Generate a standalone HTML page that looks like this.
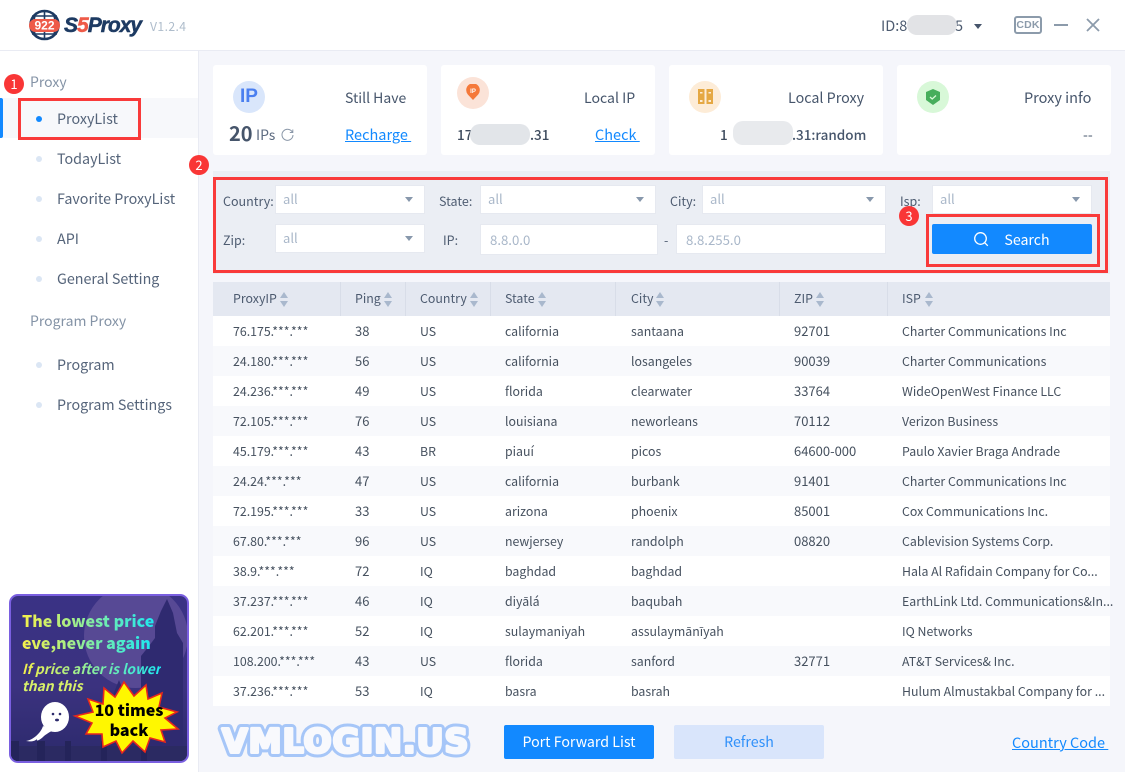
<!DOCTYPE html>
<html lang="en"><head><meta charset="utf-8"><title>S5Proxy</title>
<style>
*{box-sizing:border-box}
html,body{margin:0;padding:0;width:1125px;height:772px;overflow:hidden;background:#f5f6fb}
body{position:relative;font-family:"Noto Sans CJK SC","Liberation Sans",sans-serif;color:#46556b;font-size:14px}
.a{position:absolute}
.t{position:absolute;white-space:nowrap;line-height:20px}
.card{position:absolute;top:65px;width:214px;height:90px;background:#fff;border-radius:3px}
.ic{position:absolute;width:32px;height:32px;border-radius:50%}
.lnk{color:#1289ff;text-decoration:underline;font-size:14.5px}
.nav{font-size:14.3px;color:#55647a;left:57px}
.dot{position:absolute;left:36px;width:6px;height:6px;border-radius:50%;background:#dbe6f4}
.sel,.inp{position:absolute;background:#fff;border:1px solid #e6e9f0;color:#a9b7c9;font-size:13px;line-height:26px;padding-left:7px}
.sel:after{content:"";position:absolute;right:11px;top:11px;border-left:4.5px solid transparent;border-right:4.5px solid transparent;border-top:5px solid #8898ac}
.inp{padding-left:9px;line-height:29px;font-size:13.2px}
.lb{position:absolute;white-space:nowrap;font-size:12.5px;line-height:20px;color:#4d5b70}
.badge{position:absolute;width:20px;height:20px;border-radius:50%;background:#f93636;color:#fff;font-size:13px;line-height:20px;text-align:center}
.th{position:absolute;top:0;height:34px;line-height:33px;font-size:12.4px;color:#4d5b70;white-space:nowrap}
.sep{position:absolute;top:0;width:1px;height:34px;background:#d8dde8}
.s{position:absolute;top:10px;width:8px;height:15px}
.s:before,.s:after{content:"";position:absolute;left:0;border-left:4px solid transparent;border-right:4px solid transparent}
.s:before{top:0;border-bottom:6px solid #a9b8cd}
.s:after{bottom:0;border-top:6px solid #a9b8cd}
.r{position:absolute;left:213px;width:897px;height:30px;background:#fff}
.r:nth-child(even){background:#f8f9fc}
.r span{position:absolute;top:5px;line-height:20px;font-size:12.35px;color:#46515f;white-space:nowrap}
.r span:nth-child(1){left:20px}.r span:nth-child(2){left:142px;font-size:13px}.r span:nth-child(3){left:207px}.r span:nth-child(4){left:292px}.r span:nth-child(5){left:418px}.r span:nth-child(6){left:581px;font-size:13px}.r span:nth-child(7){left:689px}
.blur{position:absolute;background:#e2e5e9;border-radius:10px}
.btn{position:absolute;text-align:center;border-radius:2px;font-size:14.2px}
.box{position:absolute;border:3px solid #f93a3a}
</style></head><body>

<!-- header -->
<div class="a" style="left:0;top:0;width:1125px;height:51px;background:#fff;border-bottom:1px solid #e9ebf3"></div>
<svg class="a" style="left:28px;top:9px" width="35" height="32" viewBox="0 0 35 32">
<circle cx="16.5" cy="16" r="14" fill="none" stroke="#1d3a62" stroke-width="2.6"/>
<path d="M16.5 2v28M8 4c-3 7-3 17 0 24M25 4c3 7 3 17 0 24M4 7h25M4 25h25" fill="none" stroke="#1d3a62" stroke-width="1.6"/>
<rect x="1" y="10" width="31" height="13" rx="6.5" fill="#ee5a48"/>
<text x="16.5" y="20.6" font-family="Liberation Sans" font-size="12" font-weight="700" fill="#fff" text-anchor="middle">922</text>
</svg>
<div class="t" style="left:64px;top:14px;line-height:24px;font-family:'Liberation Sans',sans-serif;font-size:21px;font-weight:700;font-style:italic;color:#1d3a62;letter-spacing:-1px;-webkit-text-stroke:.5px #1d3a62">S<span style="color:#ee5a48;-webkit-text-stroke:.5px #ee5a48">5</span>Proxy</div>
<div class="t" style="left:150px;top:16px;font-size:12.2px;color:#aebccb;letter-spacing:.4px">V1.2.4</div>

<div class="t" style="left:881px;top:16px;font-size:14.5px;color:#4d5b70">ID:8</div>
<div class="t" style="left:951px;top:16px;font-size:14.5px;color:#4d5b70">.5</div>
<div class="blur" style="left:907px;top:15px;width:50px;height:20px;background:#e2e3e6"></div>
<div class="a" style="left:974px;top:24px;border-left:4px solid transparent;border-right:4px solid transparent;border-top:5px solid #46556b"></div>
<div class="a" style="left:1014px;top:16px;width:28px;height:18px;border:2px solid #8c9bab;border-radius:3px;color:#8c9bab;font-size:10.5px;font-weight:700;line-height:14px;text-align:center;font-family:'Liberation Sans',sans-serif;letter-spacing:.2px">CDK</div>
<div class="a" style="left:1054px;top:24px;width:14px;height:2px;background:#8c9bab"></div>
<svg class="a" style="left:1086px;top:18px" width="14" height="14" viewBox="0 0 14 14"><path d="M1 1l12 12M13 1L1 13" stroke="#8c9bab" stroke-width="1.8" fill="none"/></svg>

<!-- sidebar -->
<div class="a" style="left:0;top:51px;width:199px;height:721px;background:#fff;border-right:1px solid #e9ebf3"></div>
<div class="a" style="left:3px;top:98px;width:195px;height:40px;background:#f7f8fb"></div>
<div class="a" style="left:0;top:98px;width:3px;height:40px;background:#1289ff;border-radius:0 2px 2px 0"></div>
<div class="t" style="left:30px;top:72px;font-size:14px;color:#8493a6">Proxy</div>
<div class="t" style="left:30px;top:311px;font-size:14px;color:#8493a6">Program Proxy</div>
<div class="dot" style="top:116px;background:#1289ff"></div><div class="t nav" style="top:109px">ProxyList</div>
<div class="dot" style="top:156px"></div><div class="t nav" style="top:149px">TodayList</div>
<div class="dot" style="top:196px"></div><div class="t nav" style="top:189px">Favorite ProxyList</div>
<div class="dot" style="top:236px"></div><div class="t nav" style="top:229px">API</div>
<div class="dot" style="top:276px"></div><div class="t nav" style="top:269px">General Setting</div>
<div class="dot" style="top:362px"></div><div class="t nav" style="top:355px">Program</div>
<div class="dot" style="top:402px"></div><div class="t nav" style="top:395px">Program Settings</div>

<!-- banner -->
<div class="a" style="left:9px;top:594px;width:180px;height:169px;border-radius:9px;border:2px solid #7a5fe0;background:linear-gradient(180deg,#3a3285 0%,#3b327f 55%,#2c2a6c 100%);overflow:hidden">
<svg class="a" style="left:0;top:0" width="176" height="165" viewBox="0 0 176 165">
<circle cx="125" cy="40" r="52" fill="#5d4d98" opacity=".85"/>
<path d="M130 165V60l8-10 6-8V30l6-15 6-12 6 14 4 20 6 10v126zM90 165v-40l8 4 4-30 6-15 6 15 6 40 10 30z" fill="#2f2a70"/>
<path d="M0 150h176v15H0z" fill="#2b2a62"/>
<path d="M0 145h8v20H0zM26 145h8v20h-8zM54 145h6v20h-6zM90 145h6v20h-6zM130 145h6v20h-6z" fill="#24245a"/>
<path d="M32 130c-2 7-10 14-17 15 6 1 9 0 11-2-1 3 3 1 7-3 4-3 7-5 9-5z" fill="#fff"/>
<ellipse cx="44" cy="121" rx="14" ry="15" fill="#fff"/>
<circle cx="42" cy="118" r="1.3" fill="#2c2a6c"/><circle cx="49" cy="118" r="1.3" fill="#2c2a6c"/><ellipse cx="46" cy="124" rx="2" ry="1.4" fill="#2c2a6c"/>
<polygon points="64,120 82,116 77,103 92,108 93,92 104,101 113,86 123,100 135,89 137,103 151,97 148,111 166,116 154,122 167,133 150,134 154,146 139,142 134,156 122,145 111,157 105,145 92,151 91,138 75,138 81,127" fill="#fff700" stroke="#e8271d" stroke-width="1.6"/>
</svg>
<div class="t" style="left:11px;top:12px;line-height:24px;font-size:16px;font-weight:900;background:linear-gradient(90deg,#f6f04a,#1ee9f0);-webkit-background-clip:text;background-clip:text;color:transparent">The lowest price</div>
<div class="t" style="left:11px;top:34px;line-height:24px;font-size:16px;font-weight:900;background:linear-gradient(90deg,#f6f04a,#1ee9f0);-webkit-background-clip:text;background-clip:text;color:transparent">eve,never again</div>
<div class="t" style="left:11px;top:61px;line-height:22px;font-size:13.8px;font-weight:700;font-style:italic;background:linear-gradient(90deg,#f6f04a,#1ee9f0);-webkit-background-clip:text;background-clip:text;color:transparent">If price after is lower</div>
<div class="t" style="left:11px;top:78px;line-height:22px;font-size:13.8px;font-weight:700;font-style:italic;color:#d8f06a">than this</div>
<div class="t" style="left:72px;top:103px;width:92px;text-align:center;line-height:20px;font-size:16px;font-weight:900;color:#000;white-space:normal">10 times back</div>
</div>

<!-- cards -->
<div class="card" style="left:213px"></div>
<div class="card" style="left:441px"></div>
<div class="card" style="left:669px"></div>
<div class="card" style="left:897px"></div>

<div class="ic" style="left:233px;top:81px;background:#d9e6fb;color:#4a7ff0;font-weight:700;font-size:19px;line-height:32px;text-align:center;font-family:'Liberation Sans',sans-serif">IP</div>
<div class="t" style="left:345px;top:88px;font-size:14px">Still Have</div>
<div class="t" style="left:229px;top:123px;font-size:20px;font-weight:700;color:#46556b">20</div>
<div class="t" style="left:256px;top:125px;font-size:14px;color:#5d6b80">IPs</div>
<svg class="a" style="left:281px;top:128px" width="13" height="13" viewBox="0 0 13 13"><path d="M11.500 4.500A5.500 5.500 0 1 0 12 7M11.800 1.500v3h-3" fill="none" stroke="#8a97a8" stroke-width="1"/></svg>
<div class="t lnk" style="left:345px;top:125px">Recharge&nbsp;</div>

<div class="ic" style="left:457px;top:77px;background:#fbe3d8"></div>
<svg class="a" style="left:466px;top:84px" width="14" height="17" viewBox="0 0 14 17"><path d="M7 16L1.800 10.500A6.800 6.800 0 1 1 12.200 10.500z" fill="#f5793a"/><text x="7" y="9" font-family="Liberation Sans" font-size="6" font-weight="700" fill="#fff" text-anchor="middle">IP</text></svg>
<div class="t" style="left:584px;top:88px;font-size:14.1px">Local IP</div>
<div class="t" style="left:457px;top:124px;font-size:13.5px;font-weight:500;color:#3f4c5e">17</div>
<div class="t" style="left:530px;top:124px;font-size:13.5px;font-weight:500;color:#3f4c5e">.31</div>
<div class="blur" style="left:470px;top:124px;width:60px;height:21px"></div>
<div class="t lnk" style="left:595px;top:125px">Check&nbsp;</div>

<div class="ic" style="left:689px;top:81px;background:#fdecd7"></div>
<svg class="a" style="left:698px;top:89px" width="15" height="15" viewBox="0 0 15 15"><path d="M0 0h6.500v15H0zM8.500 0H15v15H8.500z" fill="#e5a843"/><path d="M2 3h2.500v1.500H2zM10.500 3H13v1.500h-2.500zM2 11h2.500v2H2zM10.500 11H13v2h-2.500z" fill="#fdecd7"/></svg>
<div class="t" style="left:788px;top:88px;font-size:14.3px">Local Proxy</div>
<div class="t" style="left:720px;top:124px;font-size:13.5px;font-weight:500;color:#3f4c5e">1</div>
<div class="t" style="left:792px;top:124px;font-size:13.5px;font-weight:500;color:#46556b">.31:random</div>
<div class="blur" style="left:733px;top:121px;width:60px;height:24px;background:#e8eaed"></div>

<div class="ic" style="left:917px;top:81px;background:#d8f8d8"></div>
<svg class="a" style="left:926px;top:89px" width="14" height="16" viewBox="0 0 14 16"><path d="M7 0l7 3v8l-7 5-7-5V3z" fill="#47ae5c"/><path d="M4 8l2.200 2L10 6.500" fill="none" stroke="#d8f8d8" stroke-width="1.300"/></svg>
<div class="t" style="left:1024px;top:88px;font-size:14.5px">Proxy info</div>
<div class="t" style="left:1083px;top:125px;font-size:14px">--</div>

<!-- filter -->
<div class="a" style="left:213px;top:171px;width:897px;height:103px;background:#ebeef4"></div>
<div class="lb" style="left:223px;top:191px">Country:</div><div class="sel" style="left:275px;top:185px;width:150px;height:29px">all</div>
<div class="lb" style="left:439px;top:191px">State:</div><div class="sel" style="left:480px;top:185px;width:176px;height:29px">all</div>
<div class="lb" style="left:670px;top:191px">City:</div><div class="sel" style="left:702px;top:185px;width:184px;height:29px">all</div>
<div class="lb" style="left:900px;top:191px">Isp:</div><div class="sel" style="left:932px;top:185px;width:160px;height:29px">all</div>
<div class="lb" style="left:223px;top:230px">Zip:</div><div class="sel" style="left:275px;top:224px;width:150px;height:29px">all</div>
<div class="lb" style="left:443px;top:230px">IP:</div><div class="inp" style="left:480px;top:224px;width:178px;height:31px">8.8.0.0</div>
<div class="lb" style="left:664px;top:230px">-</div><div class="inp" style="left:676px;top:224px;width:210px;height:30px">8.8.255.0</div>
<div class="btn" style="left:932px;top:224px;width:160px;height:30px;background:#1289ff;color:#fff;line-height:32px;padding-left:30px">Search</div>
<svg class="a" style="left:973px;top:231px" width="16" height="16" viewBox="0 0 16 16"><circle cx="7.500" cy="7.500" r="5.800" fill="none" stroke="#fff" stroke-width="1.300"/><path d="M11.800 11.800l3 3" stroke="#fff" stroke-width="1.300"/></svg>

<!-- table -->
<div class="a" style="left:213px;top:282px;width:897px;height:34px;background:#e4e8f1">
<div class="th" style="left:20px">ProxyIP</div><div class="s" style="left:67px"></div><div class="sep" style="left:127px"></div>
<div class="th" style="left:142px">Ping</div><div class="s" style="left:171px"></div><div class="sep" style="left:192px"></div>
<div class="th" style="left:207px">Country</div><div class="s" style="left:257px"></div><div class="sep" style="left:277px"></div>
<div class="th" style="left:292px">State</div><div class="s" style="left:325px"></div><div class="sep" style="left:402px"></div>
<div class="th" style="left:418px">City</div><div class="s" style="left:443px"></div><div class="sep" style="left:566px"></div>
<div class="th" style="left:581px">ZIP</div><div class="s" style="left:603px"></div><div class="sep" style="left:674px"></div>
<div class="th" style="left:689px">ISP</div><div class="s" style="left:712px"></div>
</div>
<div>
<div class="r" style="top:316px"><span>76.175.***.***</span><span>38</span><span>US</span><span>california</span><span>santaana</span><span>92701</span><span>Charter Communications Inc</span></div>
<div class="r" style="top:346px"><span>24.180.***.***</span><span>56</span><span>US</span><span>california</span><span>losangeles</span><span>90039</span><span>Charter Communications</span></div>
<div class="r" style="top:376px"><span>24.236.***.***</span><span>49</span><span>US</span><span>florida</span><span>clearwater</span><span>33764</span><span>WideOpenWest Finance LLC</span></div>
<div class="r" style="top:406px"><span>72.105.***.***</span><span>76</span><span>US</span><span>louisiana</span><span>neworleans</span><span>70112</span><span>Verizon Business</span></div>
<div class="r" style="top:436px"><span>45.179.***.***</span><span>43</span><span>BR</span><span>piauí</span><span>picos</span><span>64600-000</span><span>Paulo Xavier Braga Andrade</span></div>
<div class="r" style="top:466px"><span>24.24.***.***</span><span>47</span><span>US</span><span>california</span><span>burbank</span><span>91401</span><span>Charter Communications Inc</span></div>
<div class="r" style="top:496px"><span>72.195.***.***</span><span>33</span><span>US</span><span>arizona</span><span>phoenix</span><span>85001</span><span>Cox Communications Inc.</span></div>
<div class="r" style="top:526px"><span>67.80.***.***</span><span>96</span><span>US</span><span>newjersey</span><span>randolph</span><span>08820</span><span>Cablevision Systems Corp.</span></div>
<div class="r" style="top:556px"><span>38.9.***.***</span><span>72</span><span>IQ</span><span>baghdad</span><span>baghdad</span><span></span><span>Hala Al Rafidain Company for Co...</span></div>
<div class="r" style="top:586px"><span>37.237.***.***</span><span>46</span><span>IQ</span><span>diyālá</span><span>baqubah</span><span></span><span>EarthLink Ltd. Communications&amp;In...</span></div>
<div class="r" style="top:616px"><span>62.201.***.***</span><span>52</span><span>IQ</span><span>sulaymaniyah</span><span>assulaymānīyah</span><span></span><span>IQ Networks</span></div>
<div class="r" style="top:646px"><span>108.200.***.***</span><span>43</span><span>US</span><span>florida</span><span>sanford</span><span>32771</span><span>AT&amp;T Services&amp; Inc.</span></div>
<div class="r" style="top:676px"><span>37.236.***.***</span><span>53</span><span>IQ</span><span>basra</span><span>basrah</span><span></span><span>Hulum Almustakbal Company for ...</span></div>
</div>

<!-- footer -->
<svg class="a" style="left:210px;top:716px" width="270" height="50" viewBox="0 0 270 50">
<text x="12" y="36.500" font-family="DejaVu Sans" font-size="33" font-weight="700" letter-spacing="1.1" fill="#a6c6f8" stroke="#a6c6f8" stroke-width="9" stroke-linejoin="round">VMLOGIN.US</text>
<text x="12" y="36.500" font-family="DejaVu Sans" font-size="33" font-weight="700" letter-spacing="1.1" fill="#f8f9fd" stroke="#f8f9fd" stroke-width="3" stroke-linejoin="round">VMLOGIN.US</text>
</svg>
<div class="btn" style="left:504px;top:725px;width:150px;height:34px;background:#1289ff;color:#fff;line-height:34px">Port Forward List</div>
<div class="btn" style="left:674px;top:725px;width:150px;height:34px;background:#d9e5fb;color:#2f90fa;line-height:34px">Refresh</div>
<div class="t lnk" style="left:1012px;top:733px">Country Code&nbsp;</div>

<!-- annotations -->
<div class="box" style="left:18px;top:98px;width:123px;height:42px"></div>
<div class="box" style="left:213px;top:177px;width:895px;height:96px"></div>
<div class="box" style="left:926px;top:214px;width:174px;height:53px"></div>
<div class="badge" style="left:4px;top:74px">1</div>
<div class="badge" style="left:189px;top:155px">2</div>
<div class="badge" style="left:899px;top:206px">3</div>
</body></html>
